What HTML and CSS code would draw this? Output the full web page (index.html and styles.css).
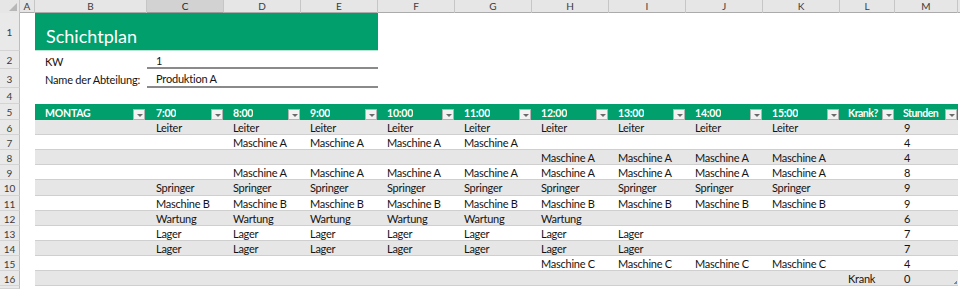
FILE: index.html
```html
<!DOCTYPE html>
<html lang="de">
<head>
<meta charset="utf-8">
<title>Schichtplan</title>
<link rel="stylesheet" href="styles.css">
</head>
<body>
<div class="sheet">
  <div class="row hdr">
    <div class="corner"></div>
    <div class="ch">A</div><div class="ch">B</div><div class="ch sel">C</div><div class="ch">D</div><div class="ch">E</div><div class="ch">F</div><div class="ch">G</div><div class="ch">H</div><div class="ch">I</div><div class="ch">J</div><div class="ch">K</div><div class="ch">L</div><div class="ch">M</div>
  </div>

  <div class="row h38">
    <div class="rh">1</div><div></div>
    <div class="title">Schichtplan</div>
  </div>
  <div class="row h18">
    <div class="rh">2</div><div></div>
    <div class="lbl">KW</div>
    <div class="val">1</div>
  </div>
  <div class="row h19">
    <div class="rh">3</div><div></div>
    <div class="lbl">Name der Abteilung:</div>
    <div class="val">Produktion A</div>
  </div>
  <div class="row h16">
    <div class="rh">4</div>
  </div>

  <div class="row h16">
    <div class="rh">5</div><div></div>
    <div class="trow head">
      <div class="th"><span>MONTAG</span><i class="dd"></i></div>
      <div class="th"><span>7:00</span><i class="dd"></i></div>
      <div class="th"><span>8:00</span><i class="dd"></i></div>
      <div class="th"><span>9:00</span><i class="dd"></i></div>
      <div class="th"><span>10:00</span><i class="dd"></i></div>
      <div class="th"><span>11:00</span><i class="dd"></i></div>
      <div class="th"><span>12:00</span><i class="dd"></i></div>
      <div class="th"><span>13:00</span><i class="dd"></i></div>
      <div class="th"><span>14:00</span><i class="dd"></i></div>
      <div class="th"><span>15:00</span><i class="dd"></i></div>
      <div class="th tight"><span>Krank?</span><i class="dd"></i></div>
      <div class="th tight"><span>Stunden</span><i class="dd"></i></div>
    </div>
  </div>

  <div class="row h15">
    <div class="rh">6</div><div></div>
    <div class="trow alt">
      <div class="td"></div><div class="td">Leiter</div><div class="td">Leiter</div><div class="td">Leiter</div><div class="td">Leiter</div><div class="td">Leiter</div><div class="td">Leiter</div><div class="td">Leiter</div><div class="td">Leiter</div><div class="td">Leiter</div><div class="td"></div><div class="td">9</div>
    </div>
  </div>
  <div class="row h15">
    <div class="rh">7</div><div></div>
    <div class="trow">
      <div class="td"></div><div class="td"></div><div class="td">Maschine A</div><div class="td">Maschine A</div><div class="td">Maschine A</div><div class="td">Maschine A</div><div class="td"></div><div class="td"></div><div class="td"></div><div class="td"></div><div class="td"></div><div class="td">4</div>
    </div>
  </div>
  <div class="row h15">
    <div class="rh">8</div><div></div>
    <div class="trow alt">
      <div class="td"></div><div class="td"></div><div class="td"></div><div class="td"></div><div class="td"></div><div class="td"></div><div class="td">Maschine A</div><div class="td">Maschine A</div><div class="td">Maschine A</div><div class="td">Maschine A</div><div class="td"></div><div class="td">4</div>
    </div>
  </div>
  <div class="row h15">
    <div class="rh">9</div><div></div>
    <div class="trow">
      <div class="td"></div><div class="td"></div><div class="td">Maschine A</div><div class="td">Maschine A</div><div class="td">Maschine A</div><div class="td">Maschine A</div><div class="td">Maschine A</div><div class="td">Maschine A</div><div class="td">Maschine A</div><div class="td">Maschine A</div><div class="td"></div><div class="td">8</div>
    </div>
  </div>
  <div class="row h16">
    <div class="rh">10</div><div></div>
    <div class="trow alt">
      <div class="td"></div><div class="td">Springer</div><div class="td">Springer</div><div class="td">Springer</div><div class="td">Springer</div><div class="td">Springer</div><div class="td">Springer</div><div class="td">Springer</div><div class="td">Springer</div><div class="td">Springer</div><div class="td"></div><div class="td">9</div>
    </div>
  </div>
  <div class="row h15">
    <div class="rh">11</div><div></div>
    <div class="trow">
      <div class="td"></div><div class="td">Maschine B</div><div class="td">Maschine B</div><div class="td">Maschine B</div><div class="td">Maschine B</div><div class="td">Maschine B</div><div class="td">Maschine B</div><div class="td">Maschine B</div><div class="td">Maschine B</div><div class="td">Maschine B</div><div class="td"></div><div class="td">9</div>
    </div>
  </div>
  <div class="row h15">
    <div class="rh">12</div><div></div>
    <div class="trow alt">
      <div class="td"></div><div class="td">Wartung</div><div class="td">Wartung</div><div class="td">Wartung</div><div class="td">Wartung</div><div class="td">Wartung</div><div class="td">Wartung</div><div class="td"></div><div class="td"></div><div class="td"></div><div class="td"></div><div class="td">6</div>
    </div>
  </div>
  <div class="row h15">
    <div class="rh">13</div><div></div>
    <div class="trow">
      <div class="td"></div><div class="td">Lager</div><div class="td">Lager</div><div class="td">Lager</div><div class="td">Lager</div><div class="td">Lager</div><div class="td">Lager</div><div class="td">Lager</div><div class="td"></div><div class="td"></div><div class="td"></div><div class="td">7</div>
    </div>
  </div>
  <div class="row h15">
    <div class="rh">14</div><div></div>
    <div class="trow alt">
      <div class="td"></div><div class="td">Lager</div><div class="td">Lager</div><div class="td">Lager</div><div class="td">Lager</div><div class="td">Lager</div><div class="td">Lager</div><div class="td">Lager</div><div class="td"></div><div class="td"></div><div class="td"></div><div class="td">7</div>
    </div>
  </div>
  <div class="row h15">
    <div class="rh">15</div><div></div>
    <div class="trow">
      <div class="td"></div><div class="td"></div><div class="td"></div><div class="td"></div><div class="td"></div><div class="td"></div><div class="td">Maschine C</div><div class="td">Maschine C</div><div class="td">Maschine C</div><div class="td">Maschine C</div><div class="td"></div><div class="td">4</div>
    </div>
  </div>
  <div class="row h15">
    <div class="rh">16</div><div></div>
    <div class="trow alt last">
      <div class="td"></div><div class="td"></div><div class="td"></div><div class="td"></div><div class="td"></div><div class="td"></div><div class="td"></div><div class="td"></div><div class="td"></div><div class="td"></div><div class="td">Krank</div><div class="td">0</div>
    </div>
  </div>
  <div class="row h3">
    <div class="rh"></div>
  </div>
</div>
</body>
</html>
```

FILE: styles.css
```css
* { box-sizing: border-box; }

html, body {
  margin: 0;
  padding: 0;
  background: #ffffff;
  overflow: hidden;
}

body {
  font-family: "Lato", "Open Sans", "DejaVu Sans", sans-serif;
  font-size: 11px;
  color: #141414;
  width: 960px;
  height: 289px;
}

.sheet {
  display: flex;
  flex-direction: column;
}

.row {
  display: grid;
  grid-template-columns: 20px 15px 112px repeat(9, 77px) 55px 63px;
}

.h38 { height: 38px; }
.h19 { height: 19px; }
.h18 { height: 18px; }
.h16 { height: 16px; }
.h15 { height: 15px; }
.h3 { height: 3px; }

/* column header */
.hdr {
  height: 13px;
  background: #e6e6e6;
  border-bottom: 1px solid #ababab;
}

.corner {
  position: relative;
  background: #e6e6e6;
  border-right: 1px solid #c6c6c6;
}

.corner::after {
  content: "";
  position: absolute;
  right: 2px;
  bottom: 2px;
  border-left: 8px solid transparent;
  border-bottom: 8px solid #b7b7b7;
}

.ch {
  text-align: center;
  color: #3b3b3b;
  font-size: 10px;
  line-height: 12px;
  border-right: 1px solid #c6c6c6;
}

.ch.sel {
  background: #d2d2d2;
  border-bottom: 1px solid #9a9a9a;
  color: #262626;
}

/* row header */
.rh {
  background: #e9e9e9;
  border-right: 1px solid #bdbdbd;
  border-bottom: 1px solid #d4d4d4;
  color: #3b3b3b;
  font-size: 10px;
  display: flex;
  align-items: center;
  justify-content: center;
  padding-top: 1px;
}

/* title */
.title {
  grid-column: 3 / 7;
  background: #009f6b;
  color: #ffffff;
  font-size: 18px;
  display: flex;
  align-items: flex-end;
  padding: 0 0 3px 11px;
  border-bottom: 1px solid #b8e6d2;
}

.lbl {
  display: flex;
  align-items: center;
  padding-left: 10px;
  white-space: nowrap;
  padding-top: 2px;
  letter-spacing: -0.2px;
}

.val {
  grid-column: 4 / 7;
  display: flex;
  align-items: center;
  padding-left: 9px;
  padding-top: 2px;
  border-bottom: 2px solid #8a8a8a;
  letter-spacing: -0.2px;
}

/* table */
.trow {
  grid-column: 3 / -1;
  display: grid;
  grid-template-columns: 112px repeat(9, 77px) 55px 63px;
  border-bottom: 1px solid #cfcfcf;
  background: #ffffff;
}

.trow.alt { background: #e7e6e6; }

.trow.head {
  background: #009f6b;
  border-bottom: none;
  color: #ffffff;
  font-weight: bold;
}

.th {
  display: flex;
  align-items: center;
  justify-content: space-between;
  padding-left: 9px;
  padding-right: 1px;
  min-width: 0;
}

.th:first-child { padding-left: 10px; padding-right: 2px; }

.th span {
  white-space: nowrap;
  overflow: hidden;
  padding-top: 1px;
  font-size: 10.5px;
  letter-spacing: -0.2px;
}

.th.tight { padding-left: 8px; }

.th.tight span {
  letter-spacing: -0.5px;
  padding-right: 1px;
}

.dd {
  position: relative;
  flex: none;
  width: 12px;
  height: 11px;
  margin-top: 4px;
  background: #f2f2f2;
  border: 1px solid #b4b4b4;
}

.dd::after {
  content: "";
  position: absolute;
  left: 3px;
  top: 4px;
  border-left: 3px solid transparent;
  border-right: 3px solid transparent;
  border-top: 3px solid #6a6a6a;
}

.td {
  display: flex;
  align-items: center;
  padding-left: 9px;
  white-space: nowrap;
  letter-spacing: -0.25px;
}

.td:nth-child(11) { padding-left: 8px; }

.trow.last { position: relative; }

.trow.last::after {
  content: "";
  position: absolute;
  right: 1px;
  bottom: 1px;
  width: 3px;
  height: 3px;
  background: linear-gradient(135deg, transparent 50%, #6d8fb5 50%);
}
```
